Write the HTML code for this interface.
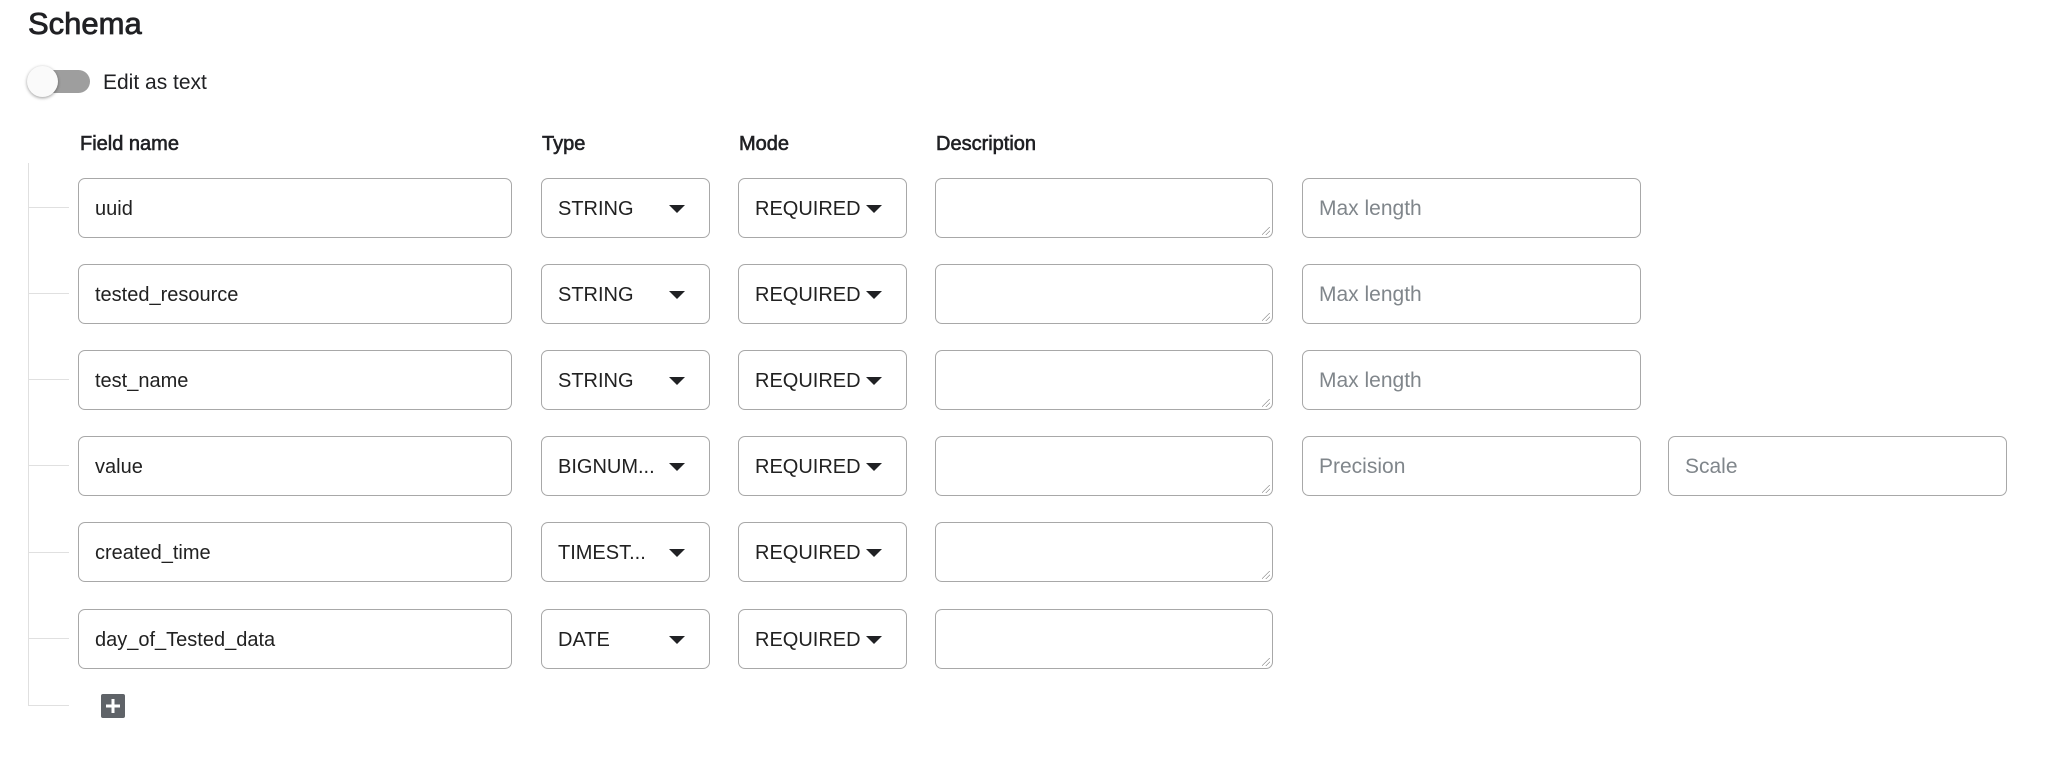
<!DOCTYPE html>
<html><head><style>
body{margin:0;width:2048px;height:779px;background:#fff;position:relative;overflow:hidden;font-family:"Liberation Sans",Arial,sans-serif;color:#202124}
.a{position:absolute}
.box{position:absolute;height:58px;border:1px solid #a8a8a8;border-radius:7px;background:#fff;box-sizing:content-box}
.t{position:absolute;font-size:20px;line-height:20px;top:20px;left:16px;color:#212121;white-space:nowrap}
.ph{color:#80868b;font-size:21px}
.arr{position:absolute;top:26px;width:0;height:0;border-left:8px solid transparent;border-right:8px solid transparent;border-top:8px solid #202124}
.h{position:absolute;top:133px;font-size:20px;font-weight:normal;-webkit-text-stroke:0.6px #202124;color:#202124}
.tick{position:absolute;left:29px;width:40px;height:1px;background:#e0e0e0}
.grip{position:absolute;right:2px;bottom:2px;width:8px;height:8px;background:linear-gradient(135deg,transparent 45%,#999 45%,#999 52%,transparent 52%,transparent 70%,#999 70%,#999 77%,transparent 77%)}
</style></head><body>
<div class="a" style="left:28px;top:6px;font-size:31px;-webkit-text-stroke:0.8px #202124;color:#202124">Schema</div>
<div class="a" style="left:32px;top:70px;width:58px;height:23px;border-radius:12px;background:#9e9e9e"></div>
<div class="a" style="left:27px;top:66px;width:31px;height:31px;border-radius:50%;background:#fafafa;box-shadow:0 1px 3px rgba(0,0,0,.4)"></div>
<div class="a" style="left:103px;top:71px;font-size:21px;color:#202124">Edit as text</div>
<div class="h" style="left:80px">Field name</div>
<div class="h" style="left:542px">Type</div>
<div class="h" style="left:739px">Mode</div>
<div class="h" style="left:936px">Description</div>
<div class="a" style="left:28px;top:163px;width:1px;height:543px;background:#e0e0e0"></div>

<div class="tick" style="top:207px"></div>
<div class="tick" style="top:293px"></div>
<div class="tick" style="top:379px"></div>
<div class="tick" style="top:465px"></div>
<div class="tick" style="top:552px"></div>
<div class="tick" style="top:638px"></div>
<div class="tick" style="top:705px"></div>

<div class="box" style="left:78px;top:178px;width:432px"><span class="t">uuid</span></div>
<div class="box" style="left:541px;top:178px;width:167px"><span class="t">STRING</span><span class="arr" style="left:127px"></span></div>
<div class="box" style="left:738px;top:178px;width:167px"><span class="t">REQUIRED</span><span class="arr" style="left:127px"></span></div>
<div class="box" style="left:935px;top:178px;width:336px"><span class="grip"></span></div>
<div class="box" style="left:1302px;top:178px;width:337px"><span class="t ph">Max length</span></div>

<div class="box" style="left:78px;top:264px;width:432px"><span class="t">tested_resource</span></div>
<div class="box" style="left:541px;top:264px;width:167px"><span class="t">STRING</span><span class="arr" style="left:127px"></span></div>
<div class="box" style="left:738px;top:264px;width:167px"><span class="t">REQUIRED</span><span class="arr" style="left:127px"></span></div>
<div class="box" style="left:935px;top:264px;width:336px"><span class="grip"></span></div>
<div class="box" style="left:1302px;top:264px;width:337px"><span class="t ph">Max length</span></div>

<div class="box" style="left:78px;top:350px;width:432px"><span class="t">test_name</span></div>
<div class="box" style="left:541px;top:350px;width:167px"><span class="t">STRING</span><span class="arr" style="left:127px"></span></div>
<div class="box" style="left:738px;top:350px;width:167px"><span class="t">REQUIRED</span><span class="arr" style="left:127px"></span></div>
<div class="box" style="left:935px;top:350px;width:336px"><span class="grip"></span></div>
<div class="box" style="left:1302px;top:350px;width:337px"><span class="t ph">Max length</span></div>

<div class="box" style="left:78px;top:436px;width:432px"><span class="t">value</span></div>
<div class="box" style="left:541px;top:436px;width:167px"><span class="t">BIGNUM...</span><span class="arr" style="left:127px"></span></div>
<div class="box" style="left:738px;top:436px;width:167px"><span class="t">REQUIRED</span><span class="arr" style="left:127px"></span></div>
<div class="box" style="left:935px;top:436px;width:336px"><span class="grip"></span></div>
<div class="box" style="left:1302px;top:436px;width:337px"><span class="t ph">Precision</span></div>
<div class="box" style="left:1668px;top:436px;width:337px"><span class="t ph">Scale</span></div>

<div class="box" style="left:78px;top:522px;width:432px"><span class="t">created_time</span></div>
<div class="box" style="left:541px;top:522px;width:167px"><span class="t">TIMEST...</span><span class="arr" style="left:127px"></span></div>
<div class="box" style="left:738px;top:522px;width:167px"><span class="t">REQUIRED</span><span class="arr" style="left:127px"></span></div>
<div class="box" style="left:935px;top:522px;width:336px"><span class="grip"></span></div>

<div class="box" style="left:78px;top:609px;width:432px"><span class="t">day_of_Tested_data</span></div>
<div class="box" style="left:541px;top:609px;width:167px"><span class="t">DATE</span><span class="arr" style="left:127px"></span></div>
<div class="box" style="left:738px;top:609px;width:167px"><span class="t">REQUIRED</span><span class="arr" style="left:127px"></span></div>
<div class="box" style="left:935px;top:609px;width:336px"><span class="grip"></span></div>

<svg class="a" style="left:101px;top:694px" width="24" height="24" viewBox="0 0 24 24"><rect x="0" y="0" width="24" height="24" rx="2" fill="#5f6368"/><path d="M12 5v14M5 12h14" stroke="#fff" stroke-width="3"/></svg>
</body></html>
